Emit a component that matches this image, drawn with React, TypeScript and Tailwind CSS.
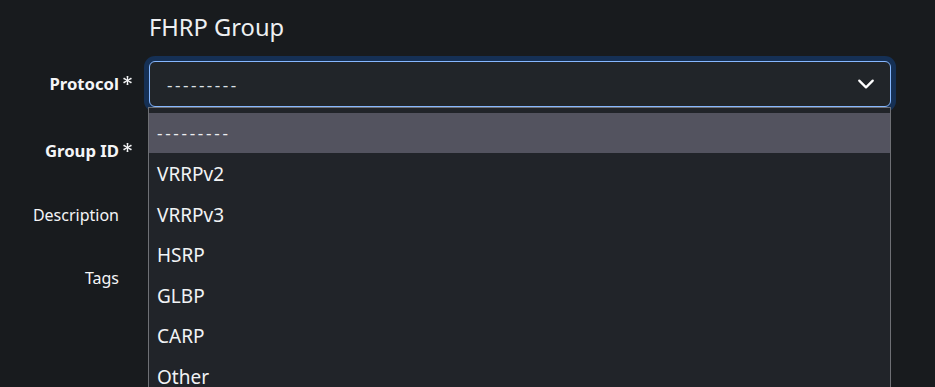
import React from "react";

function Asterisk() {
  return (
    <svg
      viewBox="0 0 24 24"
      className="absolute left-full top-[3px] ml-[3px] h-[11px] w-[11px]"
      fill="currentColor"
    >
      <path d="M10,2H14L13.21,9.91L19.66,5.27L21.66,8.73L14.42,12L21.66,15.27L19.66,18.73L13.21,14.09L14,22H10L10.79,14.09L4.34,18.73L2.34,15.27L9.58,12L2.34,8.73L4.34,5.27L10.79,9.91L10,2Z" />
    </svg>
  );
}

function Label({ text, required }: { text: string; required?: boolean }) {
  return (
    <div className="flex w-[149px] shrink-0 justify-end pr-[30px]">
      <span
        className={
          "relative leading-[24px] text-[#f4f5f7] " +
          (required ? "text-[16.7px] font-bold" : "text-[16px] font-normal")
        }
      >
        {text}
        {required && <Asterisk />}
      </span>
    </div>
  );
}

function Input() {
  return (
    <div className="h-[46px] flex-1 rounded-[6px] border border-[#495057] bg-[#212529]" />
  );
}

const options = ["VRRPv2", "VRRPv3", "HSRP", "GLBP", "CARP", "Other"];

export default function App() {
  return (
    <div className="relative h-[387px] w-full overflow-hidden bg-[#181b1e] font-['Noto_Sans',sans-serif] text-[#dee2e6]">
      <div className="pr-[44px]">
        <div className="pl-[149px] pt-[11px] text-[23.7px] leading-[32px] text-[#eef0f2]">
          FHRP Group
        </div>

        <div className="mt-[18px] flex items-center">
          <Label text="Protocol" required />
          <div className="flex h-[46px] flex-1 items-center justify-between rounded-[6px] border border-[#86b7fe] bg-[#212529] pl-[17px] pr-[15px] shadow-[0_0_0_5px_rgba(13,110,253,0.25)]">
            <span className="pt-[1px] text-[17px] leading-[24px] tracking-[2.5px] text-[#dee2e6]">
              ---------
            </span>
            <svg
              viewBox="0 0 16 16"
              className="h-[18px] w-[18px]"
              fill="none"
              stroke="#ffffff"
              strokeWidth="2"
              strokeLinecap="round"
              strokeLinejoin="round"
            >
              <path d="m2 5 6 6 6-6" />
            </svg>
          </div>
        </div>

        <div className="mt-[21px] flex items-center">
          <Label text="Group ID" required />
          <Input />
        </div>

        <div className="mt-[18px] flex items-center">
          <Label text="Description" />
          <Input />
        </div>

        <div className="mt-[17px] flex items-center">
          <Label text="Tags" />
          <Input />
        </div>
      </div>

      <div className="absolute left-[148px] top-[107px] z-10 w-[743px] border border-[#6e7075] bg-[#212429] pt-[5px] pb-[5px]">
        <div className="flex h-[40px] items-center bg-[#53535f] pl-[8px] text-[17px] tracking-[2.7px] text-[#eceef0]">
          ---------
        </div>
        {options.map((o) => (
          <div
            key={o}
            className="flex h-[40.6px] items-center pl-[8px] pt-[2px] text-[19px] text-[#f1f3f5]"
          >
            {o}
          </div>
        ))}
      </div>
    </div>
  );
}
